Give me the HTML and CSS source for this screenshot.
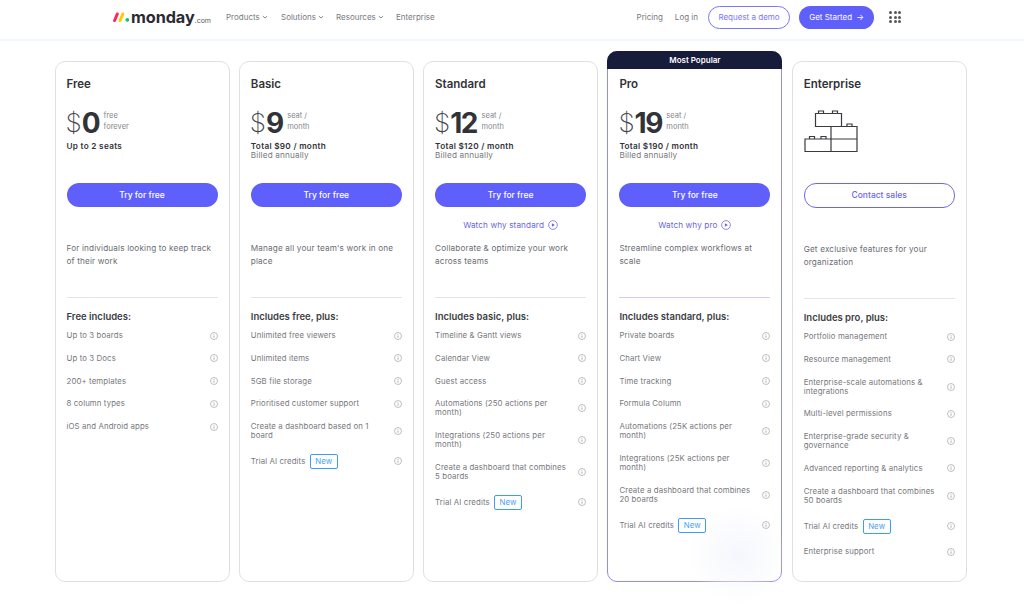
FILE: index.html
```html
<!DOCTYPE html>
<html lang="en">
<head>
<meta charset="utf-8">
<title>Pricing</title>
<link rel="stylesheet" href="styles.css">
</head>
<body>
<svg class="defs" width="0" height="0" aria-hidden="true">
  <symbol id="info" viewBox="0 0 16 16">
    <circle cx="8" cy="8" r="7" fill="none" stroke="currentColor" stroke-width="1.1"/>
    <path d="M8 7v4.500M8 4.300v1.300" fill="none" stroke="currentColor" stroke-width="1.4"/>
  </symbol>
  <symbol id="play" viewBox="0 0 16 16">
    <circle cx="8" cy="8" r="7" fill="none" stroke="currentColor" stroke-width="1.2"/>
    <path d="M6.200 5.200v5.600L11 8z" fill="currentColor"/>
  </symbol>
  <symbol id="chev" viewBox="0 0 8 8">
    <path d="M1.200 2.800 4 5.400l2.800-2.600" fill="none" stroke="currentColor" stroke-width="1.2"/>
  </symbol>
</svg>

<header class="topbar">
  <div class="nav-left">
    <a class="logo">
      <svg class="logo-mark" viewBox="0 0 17 10" width="17" height="10" aria-hidden="true">
        <path d="M1.600 8.500 4.300 2" stroke="#fb275d" stroke-width="3" stroke-linecap="round"/>
        <path d="M7.100 8.500 9.800 2" stroke="#ffcb00" stroke-width="3" stroke-linecap="round"/>
        <circle cx="14.300" cy="7.800" r="1.900" fill="#00ca72"/>
      </svg>
      <span class="logo-word">monday</span><span class="logo-com">.com</span>
    </a>
    <nav class="nav-links">
      <a class="nav-link nav-products">Products <svg class="chev"><use href="#chev"/></svg></a>
      <a class="nav-link nav-solutions">Solutions <svg class="chev"><use href="#chev"/></svg></a>
      <a class="nav-link nav-resources">Resources <svg class="chev"><use href="#chev"/></svg></a>
      <a class="nav-link">Enterprise</a>
    </nav>
  </div>
  <div class="nav-right">
    <a class="nav-link nav-pricing">Pricing</a>
    <a class="nav-link nav-login">Log in</a>
    <a class="pill pill-outline">Request a demo</a>
    <a class="pill pill-solid">Get Started <span class="arrow">→</span></a>
    <div class="apps" aria-hidden="true">
      <i></i><i></i><i></i><i></i><i></i><i></i><i></i><i></i><i></i>
    </div>
  </div>
</header>

<main class="plans">

  <section class="card">
    <div class="card-body">
      <div class="head">
        <h2 class="plan">Free</h2>
        <div class="price"><span class="cur">$</span><span class="amt">0</span><span class="per">free<br>forever</span></div>
        <p class="total">Up to 2 seats</p>
      </div>
      <a class="btn">Try for free</a>
      <div class="watch-slot"></div>
      <p class="desc">For individuals looking to keep track of their work</p>
      <hr class="rule">
      <h3 class="inc">Free includes:</h3>
      <ul class="feats">
        <li><span>Up to 3 boards</span><svg class="info"><use href="#info"/></svg></li>
        <li><span>Up to 3 Docs</span><svg class="info"><use href="#info"/></svg></li>
        <li><span>200+ templates</span><svg class="info"><use href="#info"/></svg></li>
        <li><span>8 column types</span><svg class="info"><use href="#info"/></svg></li>
        <li><span>iOS and Android apps</span><svg class="info"><use href="#info"/></svg></li>
      </ul>
    </div>
  </section>

  <section class="card">
    <div class="card-body">
      <div class="head">
        <h2 class="plan">Basic</h2>
        <div class="price"><span class="cur">$</span><span class="amt">9</span><span class="per">seat /<br>month</span></div>
        <p class="total">Total $90 / month</p>
        <p class="billed">Billed annually</p>
      </div>
      <a class="btn">Try for free</a>
      <div class="watch-slot"></div>
      <p class="desc">Manage all your team's work in one place</p>
      <hr class="rule">
      <h3 class="inc">Includes free, plus:</h3>
      <ul class="feats">
        <li><span>Unlimited free viewers</span><svg class="info"><use href="#info"/></svg></li>
        <li><span>Unlimited items</span><svg class="info"><use href="#info"/></svg></li>
        <li><span>5GB file storage</span><svg class="info"><use href="#info"/></svg></li>
        <li><span>Prioritised customer support</span><svg class="info"><use href="#info"/></svg></li>
        <li><span>Create a dashboard based on 1 board</span><svg class="info"><use href="#info"/></svg></li>
        <li><span>Trial AI credits <b class="new">New</b></span><svg class="info"><use href="#info"/></svg></li>
      </ul>
    </div>
  </section>

  <section class="card">
    <div class="card-body">
      <div class="head">
        <h2 class="plan">Standard</h2>
        <div class="price"><span class="cur">$</span><span class="amt">12</span><span class="per">seat /<br>month</span></div>
        <p class="total">Total $120 / month</p>
        <p class="billed">Billed annually</p>
      </div>
      <a class="btn">Try for free</a>
      <div class="watch-slot"><a class="watch">Watch why standard <svg class="play"><use href="#play"/></svg></a></div>
      <p class="desc">Collaborate &amp; optimize your work across teams</p>
      <hr class="rule">
      <h3 class="inc">Includes basic, plus:</h3>
      <ul class="feats">
        <li><span>Timeline &amp; Gantt views</span><svg class="info"><use href="#info"/></svg></li>
        <li><span>Calendar View</span><svg class="info"><use href="#info"/></svg></li>
        <li><span>Guest access</span><svg class="info"><use href="#info"/></svg></li>
        <li><span>Automations (250 actions per month)</span><svg class="info"><use href="#info"/></svg></li>
        <li><span>Integrations (250 actions per month)</span><svg class="info"><use href="#info"/></svg></li>
        <li><span>Create a dashboard that combines 5 boards</span><svg class="info"><use href="#info"/></svg></li>
        <li><span>Trial AI credits <b class="new">New</b></span><svg class="info"><use href="#info"/></svg></li>
      </ul>
    </div>
  </section>

  <section class="card card-pro">
    <div class="ribbon">Most Popular</div>
    <div class="card-body card-body-pro">
      <div class="head">
        <h2 class="plan">Pro</h2>
        <div class="price"><span class="cur">$</span><span class="amt">19</span><span class="per">seat /<br>month</span></div>
        <p class="total">Total $190 / month</p>
        <p class="billed">Billed annually</p>
      </div>
      <a class="btn">Try for free</a>
      <div class="watch-slot"><a class="watch">Watch why pro <svg class="play"><use href="#play"/></svg></a></div>
      <p class="desc">Streamline complex workflows at scale</p>
      <hr class="rule rule-pro">
      <h3 class="inc">Includes standard, plus:</h3>
      <ul class="feats">
        <li><span>Private boards</span><svg class="info"><use href="#info"/></svg></li>
        <li><span>Chart View</span><svg class="info"><use href="#info"/></svg></li>
        <li><span>Time tracking</span><svg class="info"><use href="#info"/></svg></li>
        <li><span>Formula Column</span><svg class="info"><use href="#info"/></svg></li>
        <li><span>Automations (25K actions per month)</span><svg class="info"><use href="#info"/></svg></li>
        <li><span>Integrations (25K actions per month)</span><svg class="info"><use href="#info"/></svg></li>
        <li><span>Create a dashboard that combines 20 boards</span><svg class="info"><use href="#info"/></svg></li>
        <li><span>Trial AI credits <b class="new">New</b></span><svg class="info"><use href="#info"/></svg></li>
      </ul>
    </div>
    <div class="glow" aria-hidden="true"></div>
  </section>

  <section class="card">
    <div class="card-body">
      <div class="head">
        <h2 class="plan">Enterprise</h2>
        <svg class="bricks" viewBox="0 0 54 42" width="54" height="42" aria-hidden="true">
          <g fill="none" stroke="#3b3b3f" stroke-width="1.2">
            <path d="M11.500 3.500h26v13h-26z"/>
            <path d="M14.500 3.500V1h5v2.500M28.500 3.500V1h5v2.500"/>
            <path d="M27 16.500h26v12.500H27zM27 29h26v12.500H27"/>
            <path d="M43 16.500V14h5v2.500"/>
            <path d="M1 29h26v12.500H1z"/>
            <path d="M5.500 29v-2.500h5V29M17 29v-2.500h5V29"/>
          </g>
        </svg>
      </div>
      <a class="btn btn-outline">Contact sales</a>
      <div class="watch-slot"></div>
      <p class="desc">Get exclusive features for your organization</p>
      <hr class="rule">
      <h3 class="inc">Includes pro, plus:</h3>
      <ul class="feats">
        <li><span>Portfolio management</span><svg class="info"><use href="#info"/></svg></li>
        <li><span>Resource management</span><svg class="info"><use href="#info"/></svg></li>
        <li><span>Enterprise-scale automations &amp; integrations</span><svg class="info"><use href="#info"/></svg></li>
        <li><span>Multi-level permissions</span><svg class="info"><use href="#info"/></svg></li>
        <li><span>Enterprise-grade security &amp; governance</span><svg class="info"><use href="#info"/></svg></li>
        <li><span>Advanced reporting &amp; analytics</span><svg class="info"><use href="#info"/></svg></li>
        <li><span>Create a dashboard that combines 50 boards</span><svg class="info"><use href="#info"/></svg></li>
        <li><span>Trial AI credits <b class="new">New</b></span><svg class="info"><use href="#info"/></svg></li>
        <li><span>Enterprise support</span><svg class="info"><use href="#info"/></svg></li>
      </ul>
    </div>
  </section>

</main>
</body>
</html>
```

FILE: styles.css
```css
* { box-sizing: border-box; }
html, body { margin: 0; padding: 0; }
body {
  width: 1024px;
  height: 604px;
  overflow: hidden;
  background: #fff;
  font-family: Inter, "Open Sans", "Liberation Sans", sans-serif;
  color: #323338;
}
.defs { position: absolute; }
a { text-decoration: none; color: inherit; }
p, h2, h3, ul { margin: 0; padding: 0; }

/* top bar */
.topbar {
  height: 41px;
  padding: 0 123px 5px 113px;
  display: flex;
  align-items: center;
  justify-content: space-between;
  border-bottom: 2px solid #f1f6fd;
}
.nav-left, .nav-right, .nav-links { display: flex; align-items: center; }
.logo { display: flex; align-items: baseline; width: 113px; }
.logo-mark { align-self: center; margin-right: 1px; }
.logo-word { font-size: 16.300px; font-weight: 700; letter-spacing: -0.100px; color: #2b2a33; }
.logo-com { font-size: 7px; color: #5c5c66; }
.nav-link { font-size: 8px; color: #787a80; white-space: nowrap; }
.nav-products { width: 55px; }
.nav-solutions { width: 55px; }
.nav-resources { width: 60px; }
.chev { width: 6px; height: 6px; }
.nav-pricing { margin-right: 12px; }
.nav-login { margin-right: 10px; }
.pill {
  height: 23px;
  border-radius: 12px;
  display: flex;
  align-items: center;
  justify-content: center;
  font-size: 8px;
}
.pill-outline { width: 82px; border: 1px solid #7b78f5; color: #7b78f5; margin-right: 9px; }
.pill-solid { width: 75px; background: #5f5ffb; color: #fff; margin-right: 15px; }
.arrow { margin-left: 4px; }
.apps { display: grid; grid-template-columns: repeat(3, 3px); gap: 1.500px; }
.apps i { width: 3px; height: 3px; border-radius: 50%; background: #55565c; }

/* plans */
.plans {
  width: 912px;
  height: 541px;
  margin-left: 54.500px;
  display: grid;
  grid-template-columns: repeat(5, 175px);
  column-gap: 9.300px;
  align-items: end;
}
.card {
  position: relative;
  height: 521px;
  border: 1px solid #dfe0e4;
  border-radius: 10px;
  background: #fff;
}
.card-pro {
  height: 531px;
  border-color: #8f8cf6;
}
.ribbon {
  height: 18px;
  margin: -1px -1px 0;
  border-radius: 10px 10px 0 0;
  background: #171c3a;
  color: #fff;
  font-size: 8px;
  font-weight: 600;
  line-height: 18px;
  text-align: center;
}
.card-body { position: relative; z-index: 1; padding: 15px 11px 0; }
.card-body-pro { padding-top: 8px; }
.head { height: 106px; }
.plan { font-size: 11.500px; line-height: 14px; font-weight: 600; color: #323338; }
.bricks { display: block; margin-top: 19px; }
.price { display: flex; align-items: flex-start; height: 32px; margin-top: 16px; }
.cur { font-size: 26px; line-height: 32px; font-weight: 200; color: #44454b; margin-left: -1px; }
.amt { font-size: 28px; line-height: 32px; font-weight: 700; color: #323338; margin-right: 4.500px; letter-spacing: -1.500px; }
.per { font-size: 7.500px; line-height: 11px; color: #85868c; padding-top: 3px; }
.total { font-size: 8.200px; line-height: 10px; font-weight: 600; letter-spacing: 0.300px; margin-top: 2px; }
.billed { font-size: 8.200px; line-height: 9px; color: #77787e; letter-spacing: 0.150px; }
.btn {
  display: flex;
  align-items: center;
  justify-content: center;
  height: 24px;
  border-radius: 12px;
  background: #5f5ffb;
  color: #fff;
  font-size: 8.500px;
  font-weight: 500;
}
.btn-outline {
  height: 25px;
  padding-bottom: 2px;
  background: #fff;
  border: 1px solid #6a67f3;
  color: #6a67f3;
}
.watch-slot { height: 35px; padding-top: 12.500px; display: flex; justify-content: center; align-items: flex-start; }
.watch { display: inline-flex; align-items: center; gap: 4px; font-size: 8.200px; line-height: 11px; letter-spacing: 0.100px; color: #6a67d8; }
.play { width: 10px; height: 10px; }
.desc { height: 55px; font-size: 8.200px; line-height: 13px; letter-spacing: 0.150px; color: #6b6c74; }
.rule { height: 1px; margin: 0; border: 0; background: #e4e5ea; }
.rule-pro { background: #cfcefa; }
.inc { margin-top: 13px; font-size: 9.500px; line-height: 12px; font-weight: 600; color: #3d3e44; }
.feats { list-style: none; margin-top: 8px; display: flex; flex-direction: column; gap: 13.800px; }
.feats li {
  display: flex;
  align-items: center;
  justify-content: space-between;
  gap: 6px;
  font-size: 7.800px;
  line-height: 9px;
  letter-spacing: 0.120px;
  color: #77787e;
}
.info { flex: none; width: 8px; height: 8px; color: #8a8b90; }
.new {
  display: inline-block;
  width: 28px;
  height: 15px;
  margin-left: 2px;
  border: 1px solid #3d9df5;
  border-radius: 2px;
  color: #4a9ff0;
  font-weight: 400;
  line-height: 13px;
  text-align: center;
  vertical-align: middle;
}
.glow {
  position: absolute;
  left: 80px;
  bottom: -24px;
  width: 100px;
  height: 100px;
  background: radial-gradient(closest-side, #f6f7fd, rgba(255,255,255,0));
  pointer-events: none;
}
```
